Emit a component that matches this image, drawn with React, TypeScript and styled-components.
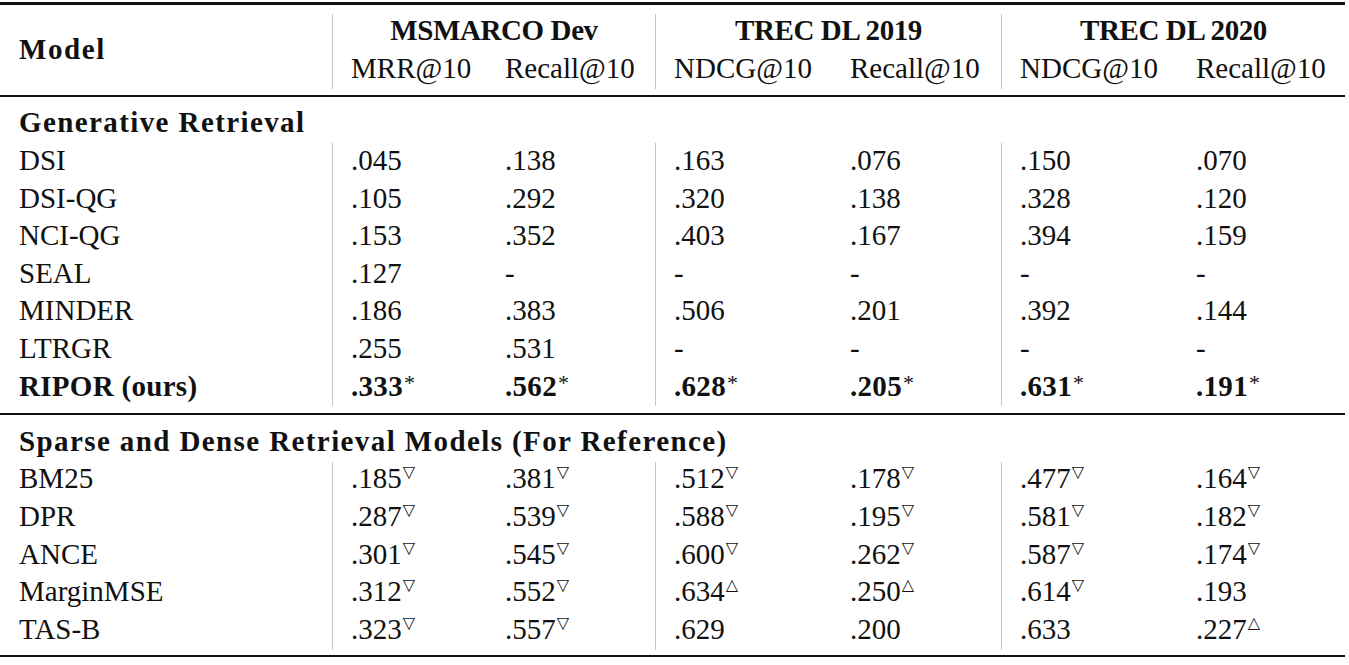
import React from "react";
import styled, { createGlobalStyle } from "styled-components";

const Global = createGlobalStyle`
  html, body { margin: 0; padding: 0; background: #fff; }
  body { font-family: "Liberation Serif", "Times New Roman", serif; color: #111; }
`;

const COLS = "332px 155px 168px 177px 169px 177px 167px";
const ROW_H = 37.6;

const Table = styled.div`
  width: 1345px;
  padding-top: 2px;
  font-size: 29px;
`;

const Rule = styled.div<{ $thick?: boolean }>`
  height: ${(p) => (p.$thick ? "2.5px" : "1.5px")};
  background: #111;
`;

const Section = styled.div<{ $top: number; $bottom: number }>`
  padding-top: ${(p) => p.$top}px;
  padding-bottom: ${(p) => p.$bottom}px;
`;

const Grid = styled.div`
  display: grid;
  grid-template-columns: ${COLS};
  grid-auto-rows: ${ROW_H}px;
`;

const Cell = styled.div<{ $sep?: boolean; $bold?: boolean; $pad?: number }>`
  display: flex;
  align-items: center;
  padding-left: ${(p) => p.$pad ?? 18}px;
  padding-bottom: 3px;
  box-sizing: border-box;
  white-space: nowrap;
  font-weight: ${(p) => (p.$bold ? 700 : 400)};
  letter-spacing: ${(p) => (p.$bold ? "0.3px" : "0")};
  border-left: ${(p) => (p.$sep ? "1px solid #c4c4c4" : "none")};
`;

const ModelHead = styled(Cell)`
  grid-row: span 2;
  font-weight: 700;
  letter-spacing: 1.6px;
`;

const GroupHead = styled(Cell)`
  grid-column: span 2;
  justify-content: center;
  padding-left: 0;
  font-weight: 700;
  letter-spacing: -0.4px;
`;

const SectionTitle = styled.div`
  height: ${ROW_H}px;
  display: flex;
  align-items: center;
  padding-left: 19px;
  padding-bottom: 3px;
  box-sizing: border-box;
  font-weight: 700;
  letter-spacing: 1.4px;
  white-space: nowrap;
`;

const Val = styled.span`
  display: inline-block;
`;

const Tri = styled.span`
  display: inline-block;
  font-family: "DejaVu Sans", sans-serif;
  font-size: 16px;
  font-weight: 400;
  line-height: 1;
  vertical-align: baseline;
  position: relative;
  top: -11px;
  margin-left: 1px;
  letter-spacing: 0;
`;

const Star = styled.span`
  display: inline-block;
  font-family: "Liberation Serif", serif;
  font-size: 22px;
  font-weight: 400;
  line-height: 1;
  vertical-align: baseline;
  position: relative;
  top: -6px;
  margin-left: 1px;
  letter-spacing: 0;
`;

type Row = { name: string; bold?: boolean; vals: string[] };

const generative: Row[] = [
  { name: "DSI", vals: [".045", ".138", ".163", ".076", ".150", ".070"] },
  { name: "DSI-QG", vals: [".105", ".292", ".320", ".138", ".328", ".120"] },
  { name: "NCI-QG", vals: [".153", ".352", ".403", ".167", ".394", ".159"] },
  { name: "SEAL", vals: [".127", "-", "-", "-", "-", "-"] },
  { name: "MINDER", vals: [".186", ".383", ".506", ".201", ".392", ".144"] },
  { name: "LTRGR", vals: [".255", ".531", "-", "-", "-", "-"] },
  { name: "RIPOR (ours)", bold: true, vals: [".333*", ".562*", ".628*", ".205*", ".631*", ".191*"] },
];

const reference: Row[] = [
  { name: "BM25", vals: [".185v", ".381v", ".512v", ".178v", ".477v", ".164v"] },
  { name: "DPR", vals: [".287v", ".539v", ".588v", ".195v", ".581v", ".182v"] },
  { name: "ANCE", vals: [".301v", ".545v", ".600v", ".262v", ".587v", ".174v"] },
  { name: "MarginMSE", vals: [".312v", ".552v", ".634^", ".250^", ".614v", ".193"] },
  { name: "TAS-B", vals: [".323v", ".557v", ".629", ".200", ".633", ".227^"] },
];

function Value({ v }: { v: string }) {
  const last = v[v.length - 1];
  if (last === "*") {
    return (
      <Val>
        {v.slice(0, -1)}
        <Star>*</Star>
      </Val>
    );
  }
  if (last === "v" || last === "^") {
    return (
      <Val>
        {v.slice(0, -1)}
        <Tri>{last === "v" ? "\u25BD" : "\u25B3"}</Tri>
      </Val>
    );
  }
  return <Val>{v}</Val>;
}

function Body({ title, rows }: { title: string; rows: Row[] }) {
  return (
    <>
      <SectionTitle>{title}</SectionTitle>
      <Grid>
        {rows.map((r) => (
          <React.Fragment key={r.name}>
            <Cell $bold={r.bold} $pad={19}>
              {r.name}
            </Cell>
            {r.vals.map((v, i) => (
              <Cell key={i} $sep={i % 2 === 0} $bold={r.bold}>
                <Value v={v} />
              </Cell>
            ))}
          </React.Fragment>
        ))}
      </Grid>
    </>
  );
}

export default function App() {
  return (
    <>
      <Global />
      <Table>
        <Rule $thick />
        <Section $top={9} $bottom={6.5}>
          <Grid>
            <ModelHead $pad={19}>Model</ModelHead>
            <GroupHead $sep>MSMARCO Dev</GroupHead>
            <GroupHead $sep>TREC DL 2019</GroupHead>
            <GroupHead $sep>TREC DL 2020</GroupHead>
            <Cell $sep>MRR@10</Cell>
            <Cell>Recall@10</Cell>
            <Cell $sep>NDCG@10</Cell>
            <Cell>Recall@10</Cell>
            <Cell $sep>NDCG@10</Cell>
            <Cell>Recall@10</Cell>
          </Grid>
        </Section>
        <Rule />
        <Section $top={9} $bottom={7}>
          <Body title="Generative Retrieval" rows={generative} />
        </Section>
        <Rule />
        <Section $top={9} $bottom={5}>
          <Body title="Sparse and Dense Retrieval Models (For Reference)" rows={reference} />
        </Section>
        <Rule $thick />
      </Table>
    </>
  );
}
